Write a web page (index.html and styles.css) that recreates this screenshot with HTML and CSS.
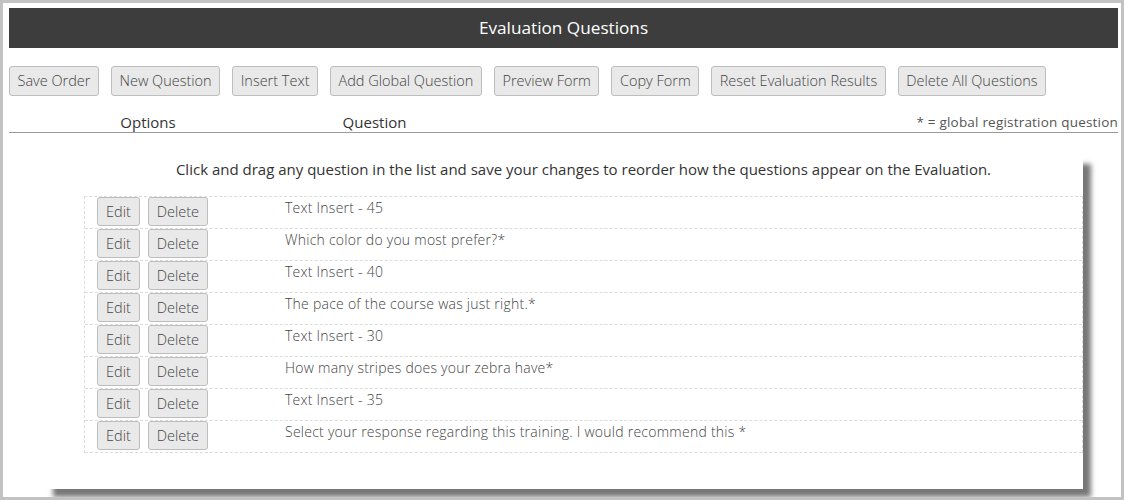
FILE: index.html
```html
<!DOCTYPE html>
<html>
<head>
<meta charset="utf-8">
<title>Evaluation Questions</title>
<link rel="stylesheet" href="styles.css">
</head>
<body>
<div class="frame">
  <div class="title">Evaluation Questions</div>
  <div class="toolbar">
    <button class="btn">Save Order</button>
    <button class="btn">New Question</button>
    <button class="btn">Insert Text</button>
    <button class="btn">Add Global Question</button>
    <button class="btn">Preview Form</button>
    <button class="btn">Copy Form</button>
    <button class="btn">Reset Evaluation Results</button>
    <button class="btn">Delete All Questions</button>
  </div>
  <div class="colhead">
    <span class="ch-options">Options</span>
    <span class="ch-question">Question</span>
    <span class="ch-note">* = global registration question</span>
  </div>
  <div class="panel">
    <p class="hint">Click and drag any question in the list and save your changes to reorder how the questions appear on the Evaluation.</p>
    <ul class="qlist">
      <li class="qrow"><div class="qopts"><button class="btn small">Edit</button><button class="btn small">Delete</button></div><span class="qtext">Text Insert - 45</span></li>
      <li class="qrow"><div class="qopts"><button class="btn small">Edit</button><button class="btn small">Delete</button></div><span class="qtext">Which color do you most prefer?*</span></li>
      <li class="qrow"><div class="qopts"><button class="btn small">Edit</button><button class="btn small">Delete</button></div><span class="qtext">Text Insert - 40</span></li>
      <li class="qrow"><div class="qopts"><button class="btn small">Edit</button><button class="btn small">Delete</button></div><span class="qtext">The pace of the course was just right.*</span></li>
      <li class="qrow"><div class="qopts"><button class="btn small">Edit</button><button class="btn small">Delete</button></div><span class="qtext">Text Insert - 30</span></li>
      <li class="qrow"><div class="qopts"><button class="btn small">Edit</button><button class="btn small">Delete</button></div><span class="qtext">How many stripes does your zebra have*</span></li>
      <li class="qrow"><div class="qopts"><button class="btn small">Edit</button><button class="btn small">Delete</button></div><span class="qtext">Text Insert - 35</span></li>
      <li class="qrow"><div class="qopts"><button class="btn small">Edit</button><button class="btn small">Delete</button></div><span class="qtext">Select your response regarding this training. I would recommend this *</span></li>
    </ul>
  </div>
</div>
</body>
</html>
```
FILE: styles.css
```css
html, body {
  margin: 0;
  padding: 0;
  background: #c2c2c2;
  height: 500px;
  overflow: hidden;
}

.frame {
  margin: 3px 3px 0 3px;
  height: 494px;
  box-sizing: border-box;
  background: #ffffff;
  padding: 5px 3px 0 6px;
  overflow: hidden;
  font-family: "Open Sans", "Liberation Sans", sans-serif;
  color: #555;
}

.title {
  height: 40px;
  line-height: 40px;
  background: #3d3d3d;
  color: #ffffff;
  text-align: center;
  font-size: 17.2px;
}

.toolbar {
  display: flex;
  gap: 12px;
  margin-top: 18px;
}

.btn {
  height: 30px;
  box-sizing: border-box;
  padding: 0 7.5px;
  background: #e9e9e9;
  border: 1px solid #bdbdbd;
  border-radius: 3px;
  font-family: "Open Sans", "Liberation Sans", sans-serif;
  font-size: 14.5px;
  font-weight: 300;
  color: #444;
  line-height: 28px;
  white-space: nowrap;
  cursor: pointer;
}

.colhead {
  display: grid;
  grid-template-columns: 278px 175px 1fr;
  margin-top: 18px;
  line-height: 17px;
  padding-bottom: 1px;
  border-bottom: 1px solid #9a9a9a;
  color: #333;
}

.ch-options,
.ch-question {
  text-align: center;
  font-size: 15px;
  font-weight: 500;
}

.ch-note {
  text-align: right;
  font-size: 13.5px;
  letter-spacing: 0.2px;
  color: #555;
}

.panel {
  margin: 23px 35px 0 36px;
  padding: 3px 0 36px 39px;
  background: #ffffff;
  box-shadow: 8px 8px 5px #777;
}

.hint {
  margin: 0 0 17px 0;
  text-align: center;
  font-size: 15px;
  font-weight: 500;
  line-height: 20px;
  color: #333;
}

.qlist {
  list-style: none;
  margin: 0;
  padding: 0;
  border-top: 1px dashed #dcdcdc;
  border-left: 1px dashed #dcdcdc;
  border-right: 1px dashed #dcdcdc;
}

.qrow {
  display: flex;
  align-items: flex-start;
  height: 31px;
  border-bottom: 1px dashed #dcdcdc;
}

.qopts {
  display: flex;
  gap: 8px;
  width: 200px;
  box-sizing: border-box;
  padding-left: 12px;
}

.btn.small {
  height: 29px;
  line-height: 27px;
  padding: 0 8px;
}

.qtext {
  padding-top: 2px;
  font-size: 14px;
  letter-spacing: 0.25px;
  font-weight: 300;
  line-height: 18px;
  color: #444;
}
```
